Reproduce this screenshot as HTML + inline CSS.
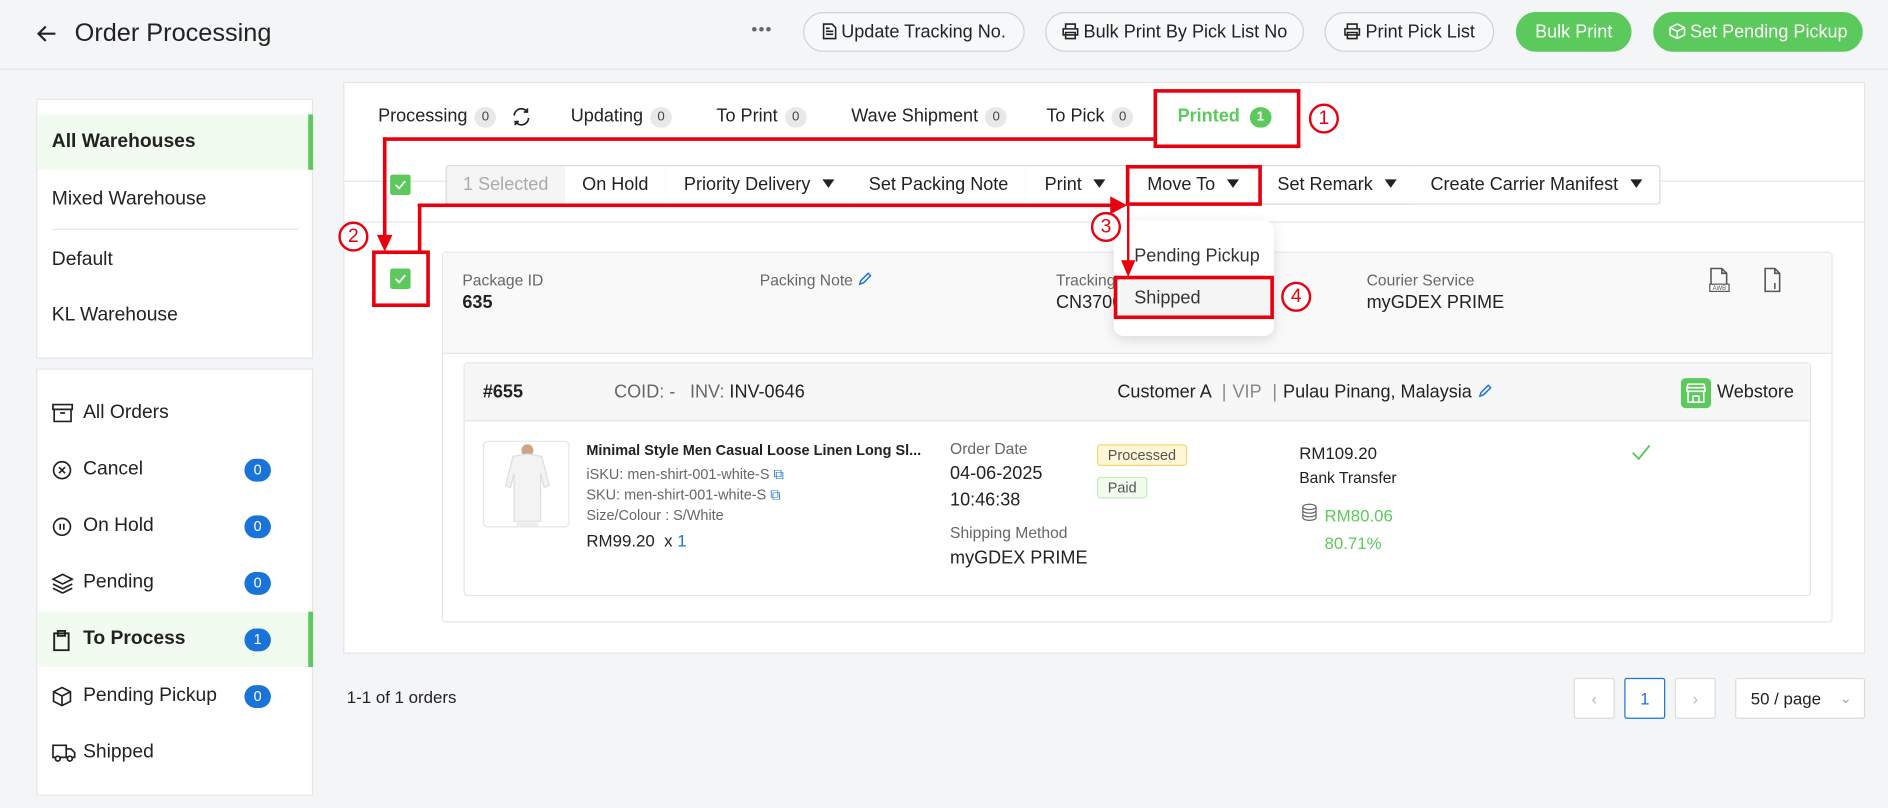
<!DOCTYPE html>
<html><head><meta charset="utf-8">
<style>
*{box-sizing:border-box;margin:0;padding:0}
html,body{width:1888px;height:807px;overflow:hidden;background:#f4f5f7;font-family:"Liberation Sans",Arial,sans-serif;color:#222}
#w{position:absolute;left:0;top:0;width:1568px;height:671px;transform:scale(1.20408);transform-origin:0 0;background:#f4f5f7}
.a{position:absolute;white-space:nowrap}
.btn{position:absolute;top:10px;height:33px;border:1px solid #cfd2d6;border-radius:17px;background:#f7f8f9;font-size:15px;line-height:31px;text-align:center;color:#222}
.gbtn{background:#5cc95c;border-color:#5cc95c;color:#fff}
.card{position:absolute;background:#fff;border:1px solid #e3e5e8}
.si{position:absolute;left:0;width:229px;height:46px;font-size:16px;line-height:46px;padding-left:12px}
.si.act{background:#f2fbef;font-weight:bold;border-right:4px solid #5cc95c}
.bd{position:absolute;left:172px;top:14px;width:22px;height:19px;border-radius:10px;background:#1a73d9;color:#fff;font-size:12px;line-height:19px;text-align:center;font-weight:normal}
.ic{position:absolute;left:12px;top:15px}
.tab{position:absolute;top:88px;font-size:15px}
.tb{display:inline-block;margin-left:6px;width:18px;height:17px;border-radius:9px;background:#e8e8e8;font-size:11px;line-height:17px;text-align:center;color:#444;vertical-align:1px}
.act-bar{position:absolute;top:137px;height:33px;border:1px solid #d9d9d9;border-left:none;font-size:15px;line-height:31px;text-align:center;background:#fff}
.car{display:inline-block;width:0;height:0;border-left:5px solid transparent;border-right:5px solid transparent;border-top:7px solid #222;margin-left:10px;vertical-align:2px}
.red{position:absolute;border:3px solid #e8000f}
.rl{position:absolute;background:#e8000f}
.num{position:absolute;width:25px;height:25px;border:2px solid #e8000f;border-radius:50%;color:#e8000f;font-size:16px;line-height:21px;text-align:center;background:#fff}
.cb{position:absolute;width:17px;height:17px;background:#5cc95c;border-radius:2px}
.lbl{font-size:13px;color:#666}
.val{font-size:15px;color:#222}
.tag{position:absolute;height:18px;font-size:12px;line-height:16px;padding:0 8px;border-radius:3px}
</style></head><body><div id="w">

<!-- top bar -->
<div class="a" style="left:0;top:0;width:1568px;height:58px;border-bottom:1px solid #e2e4e7"></div>
<svg class="a" style="left:30px;top:20px" width="18" height="16" viewBox="0 0 18 16"><path d="M16 8H2M8 2L2 8l6 6" fill="none" stroke="#222" stroke-width="1.8"/></svg>
<div class="a" style="left:62px;top:16px;font-size:21px;color:#222">Order Processing</div>
<div class="a" style="left:624px;top:16px;font-size:14px;color:#666;letter-spacing:1px">•••</div>
<div class="btn" style="left:667px;width:184px"><svg width="12" height="14" viewBox="0 0 12 14" style="vertical-align:-2px;margin-right:4px"><path d="M1 1h7l3 3v9H1z M3 7h6M3 9.5h6M3 4.5h3" fill="none" stroke="#222" stroke-width="1.3"/></svg>Update Tracking No.</div>
<div class="btn" style="left:868px;width:215px"><svg width="14" height="14" viewBox="0 0 14 14" style="vertical-align:-2px;margin-right:4px"><path d="M3 5V1h8v4M1 5h12v5H1zM3 8h8v5H3z" fill="none" stroke="#222" stroke-width="1.3"/></svg>Bulk Print By Pick List No</div>
<div class="btn" style="left:1100px;width:141px"><svg width="14" height="14" viewBox="0 0 14 14" style="vertical-align:-2px;margin-right:4px"><path d="M3 5V1h8v4M1 5h12v5H1zM3 8h8v5H3z" fill="none" stroke="#222" stroke-width="1.3"/></svg>Print Pick List</div>
<div class="btn gbtn" style="left:1259px;width:96px">Bulk Print</div>
<div class="btn gbtn" style="left:1373px;width:174px"><svg width="14" height="14" viewBox="0 0 14 14" style="vertical-align:-2px;margin-right:4px"><path d="M7 1l6 3v6l-6 3-6-3V4zM1 4l6 3 6-3M7 7v6" fill="none" stroke="#fff" stroke-width="1.3"/></svg>Set Pending Pickup</div>

<!-- sidebar 1 -->
<div class="card" style="left:30px;top:82px;width:230px;height:216px">
 <div class="si act" style="top:12px">All Warehouses</div>
 <div class="si" style="top:60px">Mixed Warehouse</div>
 <div class="a" style="left:12px;top:107px;width:205px;height:1px;background:#e3e5e8"></div>
 <div class="si" style="top:110px">Default</div>
 <div class="si" style="top:156px">KL Warehouse</div>
</div>
<!-- sidebar 2 -->
<div class="card" style="left:30px;top:306px;width:230px;height:355px">
 <div class="si" style="top:13px;padding-left:38px"><svg class="ic" width="18" height="16" viewBox="0 0 18 16"><path d="M1 1h16v4H1zM2 5v10h14V5M7 8h4" fill="none" stroke="#222" stroke-width="1.4"/></svg>All Orders</div>
 <div class="si" style="top:60px;padding-left:38px"><svg class="ic" width="17" height="17" viewBox="0 0 17 17"><circle cx="8.5" cy="8.5" r="7" fill="none" stroke="#222" stroke-width="1.4"/><path d="M6 6l5 5M11 6l-5 5" stroke="#222" stroke-width="1.4"/></svg>Cancel<span class="bd">0</span></div>
 <div class="si" style="top:107px;padding-left:38px"><svg class="ic" width="17" height="17" viewBox="0 0 17 17"><circle cx="8.5" cy="8.5" r="7" fill="none" stroke="#222" stroke-width="1.4"/><path d="M7 6v5M10 6v5" stroke="#222" stroke-width="1.4"/></svg>On Hold<span class="bd">0</span></div>
 <div class="si" style="top:154px;padding-left:38px"><svg class="ic" width="18" height="17" viewBox="0 0 18 17"><path d="M9 1l8 4-8 4-8-4zM1 9l8 4 8-4M1 12.5l8 4 8-4" fill="none" stroke="#222" stroke-width="1.4"/></svg>Pending<span class="bd">0</span></div>
 <div class="si act" style="top:201px;padding-left:38px"><svg class="ic" width="16" height="18" viewBox="0 0 16 18"><path d="M2 3h12v14H2zM5 1h6v4H5z" fill="none" stroke="#222" stroke-width="1.6"/></svg>To Process<span class="bd">1</span></div>
 <div class="si" style="top:248px;padding-left:38px"><svg class="ic" width="17" height="17" viewBox="0 0 17 17"><path d="M8.5 1l7 3.5v8l-7 3.5-7-3.5v-8zM1.5 4.5l7 3.5 7-3.5M8.5 8v8" fill="none" stroke="#222" stroke-width="1.4"/></svg>Pending Pickup<span class="bd">0</span></div>
 <div class="si" style="top:295px;padding-left:38px"><svg class="ic" width="20" height="16" viewBox="0 0 20 16"><path d="M1 2h11v10H1zM12 5h4l3 3v4h-7" fill="none" stroke="#222" stroke-width="1.4"/><circle cx="5" cy="13" r="2" fill="#fff" stroke="#222" stroke-width="1.4"/><circle cx="15" cy="13" r="2" fill="#fff" stroke="#222" stroke-width="1.4"/></svg>Shipped</div>
</div>

<!-- main card -->
<div class="card" style="left:285px;top:68px;width:1264px;height:475px"></div>
<div class="tab" style="left:314px">Processing<span class="tb">0</span></div>
<svg class="a" style="left:425px;top:89px" width="16" height="16" viewBox="0 0 16 16"><path d="M2 7a6 6 0 0 1 11-3M14 9a6 6 0 0 1-11 3M13 1v3h-3M3 15v-3h3" fill="none" stroke="#222" stroke-width="1.4"/></svg>
<div class="tab" style="left:474px">Updating<span class="tb">0</span></div>
<div class="tab" style="left:595px">To Print<span class="tb">0</span></div>
<div class="tab" style="left:707px">Wave Shipment<span class="tb">0</span></div>
<div class="tab" style="left:869px">To Pick<span class="tb">0</span></div>
<div class="tab" style="left:978px;color:#5cc95c;font-weight:bold">Printed<span class="tb" style="background:#5cc95c;color:#fff;margin-left:8px">1</span></div>
<div class="a" style="left:286px;top:150px;width:1262px;height:1px;background:#e3e5e8"></div>
<div class="a" style="left:286px;top:184px;width:1262px;height:1px;background:#e3e5e8"></div>

<div class="cb" style="left:324px;top:145px"><svg width="17" height="17"><path d="M4.5 8.5l3 3 5-6" fill="none" stroke="#fff" stroke-width="1.5"/></svg></div>
<div class="act-bar" style="left:370px;width:100px;border-left:1px solid #d9d9d9;background:#f5f5f5;color:#aaa;border-radius:3px 0 0 3px">1 Selected</div>
<div class="act-bar" style="left:469px;width:85px">On Hold</div>
<div class="act-bar" style="left:553px;width:156px">Priority Delivery<span class="car"></span></div>
<div class="act-bar" style="left:708px;width:144px">Set Packing Note</div>
<div class="act-bar" style="left:851px;width:85px">Print<span class="car"></span></div>
<div class="act-bar" style="left:935px;width:113px">Move To<span class="car"></span></div>
<div class="act-bar" style="left:1047px;width:128px">Set Remark<span class="car"></span></div>
<div class="act-bar" style="left:1174px;width:205px;border-radius:0 3px 3px 0">Create Carrier Manifest<span class="car"></span></div>

<!-- package card -->
<div class="card" style="left:367px;top:209px;width:1155px;height:308px;border-radius:3px"></div>
<div class="a" style="left:368px;top:210px;width:1153px;height:84px;background:#f9f9f9;border-bottom:1px solid #e3e5e8"></div>
<div class="a lbl" style="left:384px;top:225px">Package ID</div>
<div class="a val" style="left:384px;top:243px;font-weight:bold">635</div>
<div class="a lbl" style="left:631px;top:225px">Packing Note <svg width="13" height="13" viewBox="0 0 13 13" style="vertical-align:-1px"><path d="M2 11l1-3 6-6 2 2-6 6z" fill="none" stroke="#1a73d9" stroke-width="1.2"/></svg></div>
<div class="a lbl" style="left:877px;top:225px">Tracking</div>
<div class="a val" style="left:877px;top:243px">CN3700</div>
<div class="a lbl" style="left:1135px;top:225px">Courier Service</div>
<div class="a val" style="left:1135px;top:243px">myGDEX PRIME</div>
<svg class="a" style="left:1419px;top:222px" width="18" height="22" viewBox="0 0 18 22"><path d="M2 1h9l4 4v10H2zM11 1v4h4" fill="none" stroke="#555" stroke-width="1.3"/><rect x="1" y="14" width="16" height="6" fill="#fff" stroke="#555"/><text x="9" y="19" font-size="5" text-anchor="middle" fill="#555" font-family="Liberation Sans">AWB</text></svg>
<svg class="a" style="left:1464px;top:222px" width="16" height="22" viewBox="0 0 16 22"><path d="M2 1h8l4 4v15H2zM10 1v4h4M10 13v5" fill="none" stroke="#555" stroke-width="1.3"/></svg>

<div class="card" style="left:385px;top:301px;width:1119px;height:194px;border-radius:3px"></div>
<div class="a" style="left:386px;top:302px;width:1117px;height:48px;background:#f7f7f7;border-bottom:1px solid #e3e5e8"></div>
<div class="a" style="left:401px;top:317px;font-size:15px;font-weight:bold">#655</div>
<div class="a" style="left:510px;top:317px;font-size:15px;color:#666">COID: -</div>
<div class="a" style="left:573px;top:317px;font-size:15px;color:#666">INV: <span style="color:#222">INV-0646</span></div>
<div class="a" style="left:928px;top:317px;font-size:15px">Customer A <span style="color:#888;margin:0 5px">|</span><span style="color:#888">VIP</span> <span style="color:#888;margin:0 5px">|</span>Pulau Pinang, Malaysia <svg width="13" height="13" viewBox="0 0 13 13" style="vertical-align:-1px"><path d="M2 11l1-3 6-6 2 2-6 6z" fill="none" stroke="#1a73d9" stroke-width="1.2"/></svg></div>
<div class="a" style="left:1396px;top:314px;width:25px;height:25px;background:#5cc95c;border-radius:4px"><svg width="25" height="25" viewBox="0 0 25 25"><path d="M5 8h15l-1-3H6zM5 8v3h15V8M6 11v9h13v-9M10 20v-5h5v5" fill="none" stroke="#fff" stroke-width="1.3"/></svg></div>
<div class="a" style="left:1426px;top:317px;font-size:15px">Webstore</div>

<div class="a" style="left:401px;top:366px;width:72px;height:72px;border:1px solid #e3e5e8;border-radius:4px;background:#fff;overflow:hidden">
<svg width="72" height="72" viewBox="0 0 72 72"><circle cx="36" cy="7" r="5" fill="#c9a58a"/><path d="M24 12l12-2 12 2 6 24-4 2-3-12v40H25V26l-3 12-4-2z" fill="#f3f3f3" stroke="#ddd"/><path d="M27 66h18v6H27z" fill="#eee"/></svg></div>
<div class="a" style="left:487px;top:367px;font-size:12px;font-weight:bold">Minimal Style Men Casual Loose Linen Long Sl...</div>
<div class="a" style="left:487px;top:387px;font-size:12px;color:#666">iSKU: men-shirt-001-white-S <span style="color:#1a73d9">⧉</span></div>
<div class="a" style="left:487px;top:404px;font-size:12px;color:#666">SKU: men-shirt-001-white-S <span style="color:#1a73d9">⧉</span></div>
<div class="a" style="left:487px;top:421px;font-size:12px;color:#666">Size/Colour : S/White</div>
<div class="a" style="left:487px;top:441px;font-size:14px">RM99.20 &nbsp;x <span style="color:#1a73d9">1</span></div>

<div class="a lbl" style="left:789px;top:365px">Order Date</div>
<div class="a val" style="left:789px;top:385px">04-06-2025</div>
<div class="a val" style="left:789px;top:407px">10:46:38</div>
<div class="a lbl" style="left:789px;top:435px">Shipping Method</div>
<div class="a val" style="left:789px;top:455px">myGDEX PRIME</div>

<div class="tag" style="left:911px;top:369px;background:#fff6d5;border:1px solid #f3d871;color:#555">Processed</div>
<div class="tag" style="left:911px;top:396px;background:#f1fbee;border:1px solid #c4ecbd;color:#555">Paid</div>

<div class="a val" style="left:1079px;top:368px;font-size:14px">RM109.20</div>
<div class="a" style="left:1079px;top:389px;font-size:13px">Bank Transfer</div>
<svg class="a" style="left:1081px;top:418px" width="13" height="15" viewBox="0 0 13 15"><ellipse cx="6.5" cy="3" rx="5.5" ry="2.2" fill="none" stroke="#666"/><path d="M1 3v9c0 1.2 2.5 2.2 5.5 2.2S12 13.2 12 12V3M1 6c0 1.2 2.5 2.2 5.5 2.2S12 7.2 12 6M1 9c0 1.2 2.5 2.2 5.5 2.2S12 10.2 12 9" fill="none" stroke="#666"/></svg>
<div class="a" style="left:1100px;top:420px;font-size:14px;color:#5cc95c">RM80.06</div>
<div class="a" style="left:1100px;top:443px;font-size:14px;color:#5cc95c">80.71%</div>
<svg class="a" style="left:1355px;top:369px" width="16" height="14" viewBox="0 0 16 14"><path d="M1 7l5 5 9-11" fill="none" stroke="#5cc95c" stroke-width="1.6"/></svg>

<!-- dropdown -->
<div class="a" style="left:925px;top:183px;width:133px;height:96px;background:#fff;border-radius:8px;box-shadow:0 3px 10px rgba(0,0,0,.12)"></div>
<div class="a" style="left:942px;top:204px;font-size:15px;color:#333">Pending Pickup</div>
<div class="a" style="left:930px;top:232px;width:124px;height:30px;background:#f5f5f5"></div>
<div class="a" style="left:942px;top:239px;font-size:15px;color:#333">Shipped</div>

<!-- footer -->
<div class="a" style="left:288px;top:571px;font-size:14px">1-1 of 1 orders</div>
<div class="a" style="left:1307px;top:563px;width:34px;height:34px;border:1px solid #dcdcdc;background:#fff;border-radius:2px;color:#bbb;text-align:center;line-height:32px;font-size:14px">&#8249;</div>
<div class="a" style="left:1349px;top:563px;width:34px;height:34px;border:1px solid #1a73d9;background:#fff;border-radius:2px;color:#1a73d9;text-align:center;line-height:32px;font-size:14px">1</div>
<div class="a" style="left:1391px;top:563px;width:34px;height:34px;border:1px solid #dcdcdc;background:#fff;border-radius:2px;color:#bbb;text-align:center;line-height:32px;font-size:14px">&#8250;</div>
<div class="a" style="left:1441px;top:563px;width:108px;height:34px;border:1px solid #dcdcdc;background:#fff;border-radius:2px;font-size:14px;line-height:32px;padding-left:12px">50 / page<span style="position:absolute;right:10px;color:#aaa;font-size:12px">&#8964;</span></div>

<!-- annotations -->
<div class="red" style="left:958px;top:74px;width:122px;height:49px"></div>
<div class="num" style="left:1087px;top:86px">1</div>
<div class="rl" style="left:318px;top:114px;width:642px;height:3px"></div>
<div class="rl" style="left:318px;top:114px;width:3px;height:84px"></div>
<svg class="a" style="left:313px;top:195px" width="13" height="14"><path d="M0 0h13L6.5 14z" fill="#e8000f"/></svg>
<div class="red" style="left:309px;top:208px;width:48px;height:47px"></div>
<div class="cb" style="left:324px;top:223px"><svg width="17" height="17"><path d="M4.5 8.5l3 3 5-6" fill="none" stroke="#fff" stroke-width="1.5"/></svg></div>
<div class="num" style="left:281px;top:184px">2</div>
<div class="rl" style="left:347px;top:169px;width:3px;height:40px"></div>
<div class="rl" style="left:347px;top:169px;width:578px;height:3px"></div>
<svg class="a" style="left:922px;top:163px" width="14" height="15"><path d="M0 0v15l14-7.5z" fill="#e8000f"/></svg>
<div class="red" style="left:935px;top:137px;width:113px;height:34px"></div>
<div class="rl" style="left:936px;top:171px;width:2px;height:48px"></div>
<svg class="a" style="left:931px;top:216px" width="12" height="14"><path d="M0 0h12L6 14z" fill="#e8000f"/></svg>
<div class="num" style="left:906px;top:176px">3</div>
<div class="red" style="left:925px;top:229px;width:133px;height:36px"></div>
<div class="num" style="left:1064px;top:234px">4</div>

</div></body></html>
